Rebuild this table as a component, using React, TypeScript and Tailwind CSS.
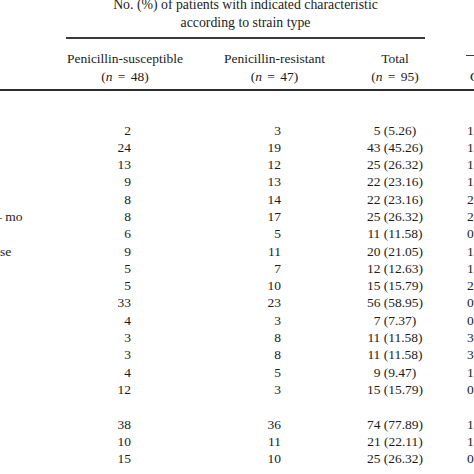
const rows: ([string, string, string, string, string] | null)[] = [
  ["", "2", "3", "5 (5.26)", "1"],
  ["", "24", "19", "43 (45.26)", "1"],
  ["", "13", "12", "25 (26.32)", "1"],
  ["", "9", "13", "22 (23.16)", "1"],
  ["", "8", "14", "22 (23.16)", "2"],
  ["– mo", "8", "17", "25 (26.32)", "2"],
  ["", "6", "5", "11 (11.58)", "0"],
  ["se", "9", "11", "20 (21.05)", "1"],
  ["", "5", "7", "12 (12.63)", "1"],
  ["", "5", "10", "15 (15.79)", "2"],
  ["", "33", "23", "56 (58.95)", "0"],
  ["", "4", "3", "7 (7.37)", "0"],
  ["", "3", "8", "11 (11.58)", "3"],
  ["", "3", "8", "11 (11.58)", "3"],
  ["", "4", "5", "9 (9.47)", "1"],
  ["", "12", "3", "15 (15.79)", "0"],
  null,
  ["", "38", "36", "74 (77.89)", "1"],
  ["", "10", "11", "21 (22.11)", "1"],
  ["", "15", "10", "25 (26.32)", "0"],
];

// sample size label, e.g. (n = 48)
function Size({ n }: { n: number }) {
  return (
    <div>
      (<span className="italic">n</span> <span className="px-[2px]">=</span> {n})
    </div>
  );
}

export default function App() {
  return (
    <div
      className="w-[474px] h-[474px] overflow-hidden bg-white text-[#1c1c1c] text-[13.5px]"
      style={{ fontFamily: '"Liberation Serif", "Times New Roman", serif' }}
    >
      <div className="-mt-[4px] flex">
        <div className="ml-[66px] w-[359px] flex flex-col text-[13.8px]">
          <div className="text-center leading-[18px] whitespace-nowrap">
            No. (%) of patients with indicated characteristic
          </div>
          <div className="text-center leading-[18px]">according to strain type</div>
          <div className="mt-[5px] h-[1.5px] bg-[#3a3a3a]" />
        </div>
      </div>

      <div className="mt-[11px] flex leading-[18px]">
        <div className="w-[60px] shrink-0" />
        <div className="w-[130px] shrink-0 text-center">
          <div>Penicillin-susceptible</div>
          <Size n={48} />
        </div>
        <div className="w-[169px] shrink-0 text-center">
          <div>Penicillin-resistant</div>
          <Size n={47} />
        </div>
        <div className="w-[72px] shrink-0 text-center">
          <div>Total</div>
          <Size n={95} />
        </div>
        <div className="flex-1 pl-[35px] overflow-hidden whitespace-nowrap">
          <div className="h-[18px] pt-[5px]">
            <div className="h-[1.5px] bg-[#3a3a3a]" />
          </div>
          <div className="pl-[4px]">CI</div>
        </div>
      </div>
      <div className="mt-[3px] h-[2px] bg-[#2e2e2e]" />

      <div className="mt-[31px] flex flex-col">
        {rows.map((r, i) =>
          r ? (
            <div key={i} className="flex h-[17.3px] leading-[17.3px] whitespace-nowrap">
              <div className="w-[60px] shrink-0 overflow-hidden">
                <span className={r[0].startsWith("–") ? "-ml-[5px]" : ""}>{r[0]}</span>
              </div>
              <div className="w-[71px] shrink-0 text-right">{r[1]}</div>
              <div className="w-[150px] shrink-0 text-right">{r[2]}</div>
              <div className="ml-[44px] w-[140px] shrink-0 text-center">{r[3]}</div>
              <div className="pl-[2px]">{r[4]}</div>
            </div>
          ) : (
            <div key={i} className="h-[17.3px]" />
          )
        )}
      </div>
    </div>
  );
}
